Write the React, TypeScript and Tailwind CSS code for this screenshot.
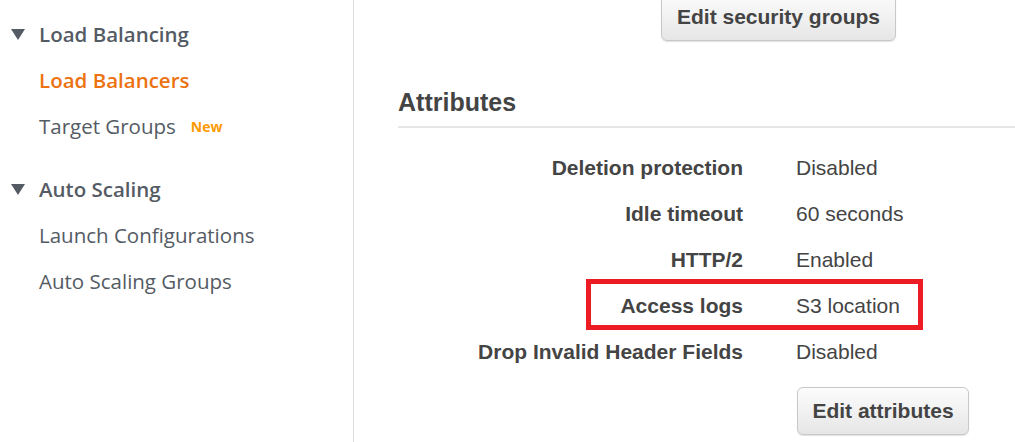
import React from 'react';

const rows = [
  { label: 'Deletion protection', value: 'Disabled' },
  { label: 'Idle timeout', value: '60 seconds' },
  { label: 'HTTP/2', value: 'Enabled' },
  { label: 'Access logs', value: 'S3 location', marked: true },
  { label: 'Drop Invalid Header Fields', value: 'Disabled' },
];

function Caret() {
  return (
    <svg width="14" height="11" viewBox="0 0 14 11" className="mr-[14px] shrink-0">
      <path d="M0 0 H14 L7 11 Z" fill="#545b64" />
    </svg>
  );
}

function Sidebar() {
  return (
    <aside className="w-[354px] shrink-0 border-r border-[#dddddd] pt-[11px] pl-[11px] font-['Open_Sans',sans-serif] text-[20.5px] text-[#545b64]">
      {/* Load Balancing */}
      <div className="h-[46px] flex items-center font-semibold">
        <Caret />
        Load Balancing
      </div>
      <div className="h-[46px] flex items-center pl-[28px] font-semibold text-[#ec7211]">
        Load Balancers
      </div>
      <div className="h-[46px] flex items-center pl-[28px]">
        Target Groups
        <span className="ml-[15px] text-[14px] font-bold text-[#ff9900]">New</span>
      </div>

      {/* Auto Scaling */}
      <div className="mt-[17px] h-[46px] flex items-center font-semibold">
        <Caret />
        Auto Scaling
      </div>
      <div className="h-[46px] flex items-center pl-[28px]">Launch Configurations</div>
      <div className="h-[46px] flex items-center pl-[28px]">Auto Scaling Groups</div>
    </aside>
  );
}

function GreyButton({ children, className }: { children: React.ReactNode; className: string }) {
  return (
    <button
      className={
        'h-[48px] rounded-[6px] border border-[#c8c8c8] bg-linear-to-b from-[#fcfcfc] to-[#e6e6e6] shadow-[0_1px_1px_rgba(0,0,0,0.12)] text-[21px] font-bold text-[#444444] ' +
        className
      }
    >
      {children}
    </button>
  );
}

export default function App() {
  return (
    <div className="flex h-[442px] w-[1015px] overflow-hidden bg-white">
      <Sidebar />

      <main className="flex-1 pl-[44px] font-['Liberation_Sans',Arial,sans-serif] text-[#444444]">
        <GreyButton className="-mt-[7px] ml-[263px] w-[235px]">Edit security groups</GreyButton>

        {/* Attributes */}
        <h2 className="mt-[47px] pb-[10px] border-b-2 border-[#e6e6e6] text-[25px] leading-[28px] font-bold">
          Attributes
        </h2>

        <div className="mt-[17px]">
          {rows.map((row) => (
            <div key={row.label} className="relative h-[46px] flex items-center text-[21px]">
              <div className="w-[345px] text-right font-bold">{row.label}</div>
              <div className="ml-[53px]">{row.value}</div>
              {row.marked && (
                <div className="absolute left-[188px] -top-[4px] w-[337px] h-[51px] border-[5px] border-[#ed1c24]" />
              )}
            </div>
          ))}
        </div>

        <GreyButton className="mt-[12px] ml-[399px] w-[172px]">Edit attributes</GreyButton>
      </main>
    </div>
  );
}
